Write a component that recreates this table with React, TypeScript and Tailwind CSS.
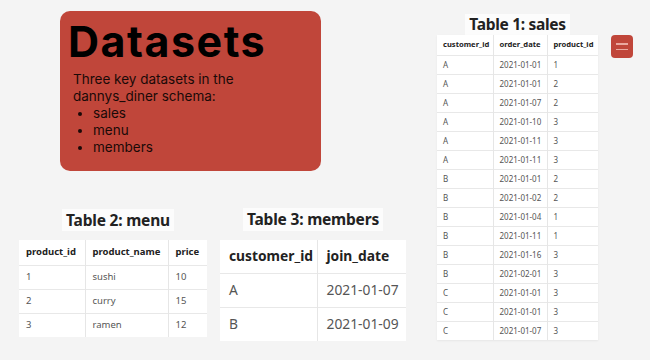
const sales = [
  ['A', '2021-01-01', '1'],
  ['A', '2021-01-01', '2'],
  ['A', '2021-01-07', '2'],
  ['A', '2021-01-10', '3'],
  ['A', '2021-01-11', '3'],
  ['A', '2021-01-11', '3'],
  ['B', '2021-01-01', '2'],
  ['B', '2021-01-02', '2'],
  ['B', '2021-01-04', '1'],
  ['B', '2021-01-11', '1'],
  ['B', '2021-01-16', '3'],
  ['B', '2021-02-01', '3'],
  ['C', '2021-01-01', '3'],
  ['C', '2021-01-01', '3'],
  ['C', '2021-01-07', '3'],
]

const menu = [
  ['1', 'sushi', '10'],
  ['2', 'curry', '15'],
  ['3', 'ramen', '12'],
]

const members = [
  ['A', '2021-01-07'],
  ['B', '2021-01-09'],
]

const tableFont = { fontFamily: '"Noto Sans", "Open Sans", sans-serif' }

export default function App() {
  return (
    <div className="relative w-[650px] h-[360px] overflow-hidden bg-[#f4f4f4]" style={tableFont}>
      {/* Intro card */}
      <div className="absolute left-[60px] top-[11px] w-[261px] h-[160px] rounded-[10px] bg-[#c0463a] px-[8px] pt-[5px]">
        <h1 className="text-[43px] leading-[50px] font-bold tracking-[1.5px] text-black" style={{ fontFamily: 'Inter, sans-serif' }}>
          Datasets
        </h1>
        <div className="mt-[5px] pl-[5px] text-[13.5px] leading-[17px] text-[#1a0a08]" style={{ fontFamily: 'Inter, sans-serif' }}>
          <p>Three key datasets in the</p>
          <p>dannys_diner schema:</p>
          <ul className="list-disc pl-[20px]">
            <li>sales</li>
            <li>menu</li>
            <li>members</li>
          </ul>
        </div>
      </div>

      {/* Table 1: sales */}
      <div className="absolute left-[437px] top-[14px] w-[161px] flex flex-col items-center">
        <h2 className="text-[15.5px] leading-[21px] font-bold tracking-[-0.3px] text-[#222] bg-white/70 px-1">Table 1: sales</h2>
        <table className="w-full border-collapse bg-white text-[7.6px] shadow-[0_1px_2px_rgba(0,0,0,0.06)]">
          <thead>
            <tr className="h-[20px] text-left text-[#222]">
              <th className="pl-[6px] font-bold border-r border-[#e6e6e6] w-[56px]">customer_id</th>
              <th className="pl-[6px] font-bold border-r border-[#e6e6e6] w-[54px]">order_date</th>
              <th className="pl-[6px] font-bold">product_id</th>
            </tr>
          </thead>
          <tbody className="text-[#555] text-[8px]">
            {sales.map((r, i) => (
              <tr key={i} className="h-[19px] border-t border-[#e8e8e8]">
                <td className="pl-[6px] border-r border-[#e6e6e6]">{r[0]}</td>
                <td className="pl-[6px] border-r border-[#e6e6e6]">{r[1]}</td>
                <td className="pl-[6px]">{r[2]}</td>
              </tr>
            ))}
          </tbody>
        </table>
      </div>

      {/* Menu button */}
      <button className="absolute left-[611px] top-[35px] w-[22px] h-[23px] rounded-[4px] bg-[#c0463a] flex flex-col items-center justify-center gap-[4px]">
        <span className="block w-[12px] h-[1.5px] bg-[#eaa89f]" />
        <span className="block w-[12px] h-[1.5px] bg-[#eaa89f]" />
      </button>

      {/* Table 2: menu */}
      <div className="absolute left-[19px] top-[209px] w-[188px] flex flex-col items-center">
        <h2 className="ml-[10px] text-[15.5px] leading-[22px] font-bold tracking-[-0.2px] text-[#222] bg-white/70 px-1">Table 2: menu</h2>
        <table className="mt-[9px] w-full border-collapse bg-white text-[9.5px]">
          <thead>
            <tr className="h-[25px] text-left text-[#222]">
              <th className="pl-[7px] font-bold border-r border-[#e6e6e6] w-[66px]">product_id</th>
              <th className="pl-[7px] font-bold border-r border-[#e6e6e6] w-[83px]">product_name</th>
              <th className="pl-[7px] font-bold">price</th>
            </tr>
          </thead>
          <tbody className="text-[#555]">
            {menu.map((r, i) => (
              <tr key={i} className="h-[24px] border-t border-[#e8e8e8]">
                <td className="pl-[7px] border-r border-[#e6e6e6]">{r[0]}</td>
                <td className="pl-[7px] border-r border-[#e6e6e6]">{r[1]}</td>
                <td className="pl-[7px]">{r[2]}</td>
              </tr>
            ))}
          </tbody>
        </table>
      </div>

      {/* Table 3: members */}
      <div className="absolute left-[220px] top-[208px] w-[186px] flex flex-col items-center">
        <h2 className="text-[15.5px] leading-[23px] font-bold tracking-[-0.2px] text-[#222] bg-white/70 px-1">Table 3: members</h2>
        <table className="mt-[9px] w-full border-collapse bg-white text-[13.8px]">
          <thead>
            <tr className="h-[33px] text-left text-[#222]">
              <th className="pl-[9px] font-bold border-r border-[#e6e6e6] w-[97px]">customer_id</th>
              <th className="pl-[9px] font-bold">join_date</th>
            </tr>
          </thead>
          <tbody className="text-[#555]">
            {members.map((r, i) => (
              <tr key={i} className="h-[34px] border-t border-[#e8e8e8]">
                <td className="pl-[9px] border-r border-[#e6e6e6]">{r[0]}</td>
                <td className="pl-[9px]">{r[1]}</td>
              </tr>
            ))}
          </tbody>
        </table>
      </div>
    </div>
  )
}
